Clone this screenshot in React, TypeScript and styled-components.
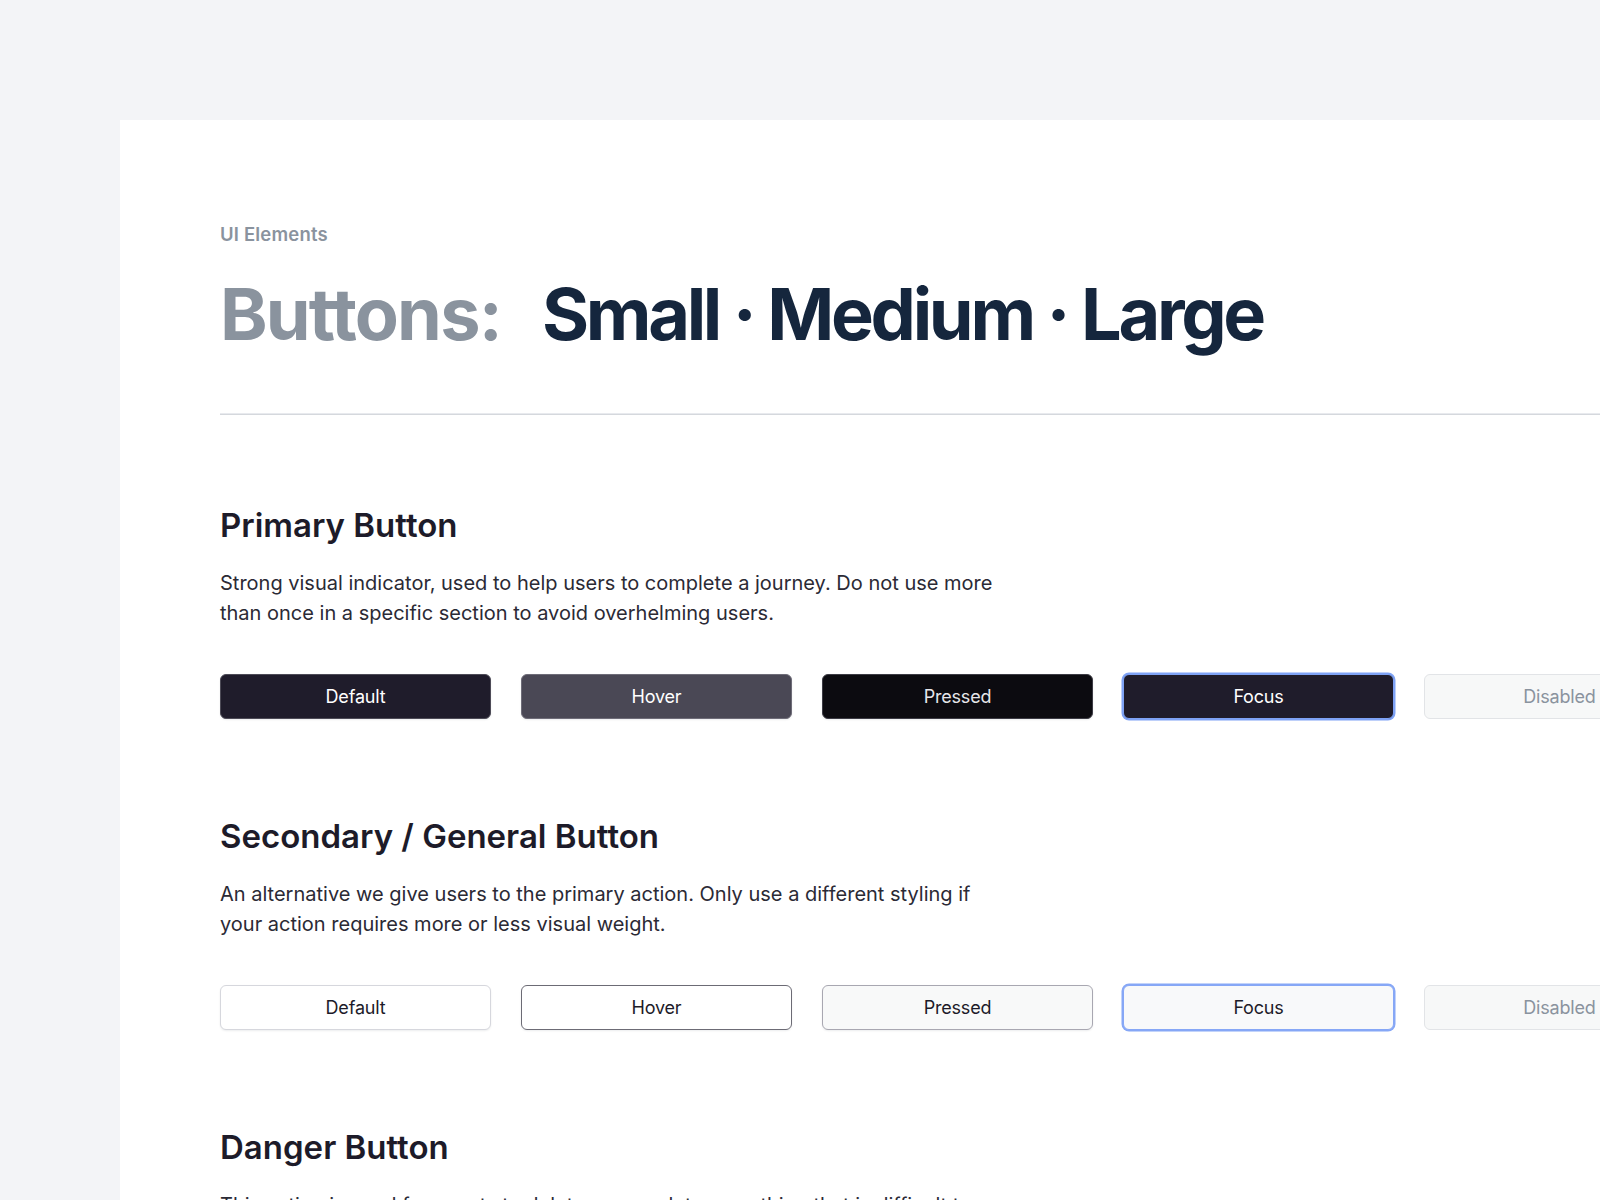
import styled, { createGlobalStyle, css } from 'styled-components';

type Variant = 'primary' | 'secondary';
type State = 'default' | 'hover' | 'pressed' | 'focus' | 'disabled';

interface SectionData {
  title: string;
  text: string;
  variant: Variant;
}

const GlobalStyle = createGlobalStyle`
  html, body {
    margin: 0;
    padding: 0;
    background: #f3f4f7;
    overflow: hidden;
  }
  body {
    font-family: Inter, 'Liberation Sans', sans-serif;
    -webkit-font-smoothing: antialiased;
  }
`;

const Page = styled.div`
  width: 1600px;
  height: 1200px;
  padding: 120px 0 0 120px;
  box-sizing: border-box;
  overflow: hidden;
`;

const Panel = styled.main`
  width: 1600px;
  min-height: 1200px;
  background: #ffffff;
  padding: 102px 0 0 100px;
  box-sizing: border-box;
`;

const Eyebrow = styled.div`
  font-size: 18.5px;
  line-height: 24px;
  font-weight: 600;
  color: #8a939e;
  letter-spacing: 0.01em;
`;

const Title = styled.h1`
  margin: 32px 0 0;
  font-size: 72px;
  line-height: 72px;
  font-weight: 700;
  letter-spacing: -0.046em;
  color: #15263d;
  white-space: nowrap;
`;

const TitleMuted = styled.span`
  color: #8a939e;
  letter-spacing: -0.025em;
  margin-right: 41px;
`;

const Divider = styled.hr`
  margin: 63px 0 0;
  border: 0;
  height: 2px;
  background: linear-gradient(#e8eaee 0 50%, #d5d8dd 50% 100%);
`;

const Sections = styled.div`
  display: flex;
  flex-direction: column;
  gap: 97px;
  margin-top: 90px;
`;

const Section = styled.section`
  display: flex;
  flex-direction: column;
`;

const Heading = styled.h2`
  margin: 0;
  font-size: 33px;
  line-height: 40px;
  font-weight: 600;
  letter-spacing: 0;
  color: #1d1b29;
`;

const Text = styled.p`
  margin: 23px 0 0;
  max-width: 780px;
  font-size: 20px;
  line-height: 30px;
  font-weight: 400;
  color: #2b2a35;
`;

const ButtonRow = styled.div`
  display: flex;
  gap: 30px;
  margin-top: 46px;
`;

const primaryStates = {
  default: css`
    background: #1f1c2b;
    border-color: #4d4b57;
    color: #ffffff;
  `,
  hover: css`
    background: #4a4855;
    border-color: #6e6c78;
    color: #ffffff;
  `,
  pressed: css`
    background: #0c0b10;
    border-color: #3c3b44;
    color: #e6e6ea;
  `,
  focus: css`
    background: #1f1c2b;
    border-color: #7ea2f5;
    box-shadow: 0 0 0 1.5px #7ea2f5;
    color: #ffffff;
  `,
  disabled: css`
    background: #f7f8f8;
    border-color: #e2e4e7;
    color: #8a939e;
    box-shadow: none;
  `,
};

const secondaryStates = {
  default: css`
    background: #ffffff;
    border-color: #d6d7dd;
    color: #1d1b29;
  `,
  hover: css`
    background: #ffffff;
    border-color: #6c6b75;
    color: #1d1b29;
  `,
  pressed: css`
    background: #f8f9f9;
    border-color: #a8a7b1;
    color: #1d1b29;
  `,
  focus: css`
    background: #f8f9fa;
    border-color: #86a7f6;
    box-shadow: 0 0 0 1.5px #86a7f6;
    color: #1d1b29;
  `,
  disabled: css`
    background: #f7f8f8;
    border-color: #e2e4e7;
    color: #8a939e;
    box-shadow: none;
  `,
};

const Button = styled.button<{ $variant: Variant; $state: State }>`
  flex: 0 0 271px;
  height: 45px;
  border: 1px solid;
  border-radius: 6px;
  font-family: Inter, 'Liberation Sans', sans-serif;
  font-size: 18px;
  font-weight: 400;
  letter-spacing: -0.01em;
  box-shadow: 0 1px 2px rgba(16, 24, 40, 0.08);
  cursor: pointer;
  ${(props) =>
    props.$variant === 'primary'
      ? primaryStates[props.$state]
      : secondaryStates[props.$state]}
`;

const states: { key: State; label: string }[] = [
  { key: 'default', label: 'Default' },
  { key: 'hover', label: 'Hover' },
  { key: 'pressed', label: 'Pressed' },
  { key: 'focus', label: 'Focus' },
  { key: 'disabled', label: 'Disabled' },
];

const sections: SectionData[] = [
  {
    title: 'Primary Button',
    text: 'Strong visual indicator, used to help users to complete a journey. Do not use more than once in a specific section to avoid overhelming users.',
    variant: 'primary',
  },
  {
    title: 'Secondary / General Button',
    text: 'An alternative we give users to the primary action. Only use a different styling if your action requires more or less visual weight.',
    variant: 'secondary',
  },
  {
    title: 'Danger Button',
    text: 'This action is used for events to delete or complete something that is difficult to reverse.',
    variant: 'primary',
  },
];

const App = () => {
  return (
    <>
      <GlobalStyle />
      <Page>
        <Panel>
          <Eyebrow>UI Elements</Eyebrow>
          <Title>
            <TitleMuted>Buttons:</TitleMuted>Small · Medium · Large
          </Title>
          <Divider />

          <Sections>
            {sections.map((section) => (
              <Section key={section.title}>
                <Heading>{section.title}</Heading>
                <Text>{section.text}</Text>
                <ButtonRow>
                  {states.map((state) => (
                    <Button
                      key={state.key}
                      $variant={section.variant}
                      $state={state.key}
                      disabled={state.key === 'disabled'}>
                      {state.label}
                    </Button>
                  ))}
                </ButtonRow>
              </Section>
            ))}
          </Sections>
        </Panel>
      </Page>
    </>
  );
};

export default App;
